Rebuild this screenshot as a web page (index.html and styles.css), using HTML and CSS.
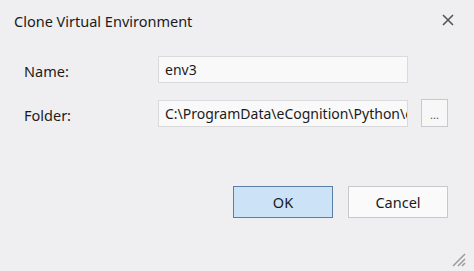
FILE: index.html
```html
<!DOCTYPE html>
<html>
<head>
<meta charset="utf-8">
<link rel="stylesheet" href="styles.css">
</head>
<body>
<div class="dialog">
  <div class="titlebar">
    <span class="title">Clone Virtual Environment</span>
    <span class="close">
      <svg width="12" height="12" viewBox="0 0 12 12"><path d="M1 1 L11 11 M11 1 L1 11" stroke="#555" stroke-width="1.6" fill="none"/></svg>
    </span>
  </div>
  <div class="form">
    <div class="label">Name:</div>
    <div class="field">env3</div>
    <div></div>
    <div class="label">Folder:</div>
    <div class="field">C:\ProgramData\eCognition\Python\env3</div>
    <div class="browse">...</div>
  </div>
  <div class="actions">
    <div class="btn ok">OK</div>
    <div class="btn">Cancel</div>
  </div>
  <svg class="grip" width="16" height="16" viewBox="0 0 16 16">
    <path d="M15 3 L3 15 M15 8 L8 15 M15 12 L12 15" stroke="#9a9a9a" stroke-width="1.5" fill="none"/>
  </svg>
</div>
</body>
</html>
```

FILE: styles.css
```css
html, body {
  margin: 0;
  padding: 0;
}
body {
  width: 474px;
  height: 271px;
  background: #efeff2;
  font-family: "Noto Sans", "Open Sans", sans-serif;
  color: #1b1b1b;
  overflow: hidden;
}
.dialog {
  position: relative;
  width: 474px;
  height: 271px;
  box-sizing: border-box;
}
.titlebar {
  display: flex;
  justify-content: space-between;
  align-items: center;
  height: 30px;
  padding: 6px 20px 0 14px;
}
.title {
  font-size: 14.5px;
}
.close {
  display: flex;
  margin-top: -2px;
}
.form {
  display: grid;
  grid-template-columns: 134px 250px 40px;
  row-gap: 17px;
  margin: 20px 0 0 24px;
}
.label {
  font-size: 14.5px;
  display: flex;
  align-items: center;
  padding-top: 3px;
}
.field {
  height: 27px;
  box-sizing: border-box;
  background: #f9f9fa;
  border: 1px solid #dadadd;
  padding: 0 6px;
  font-size: 14px;
  line-height: 25px;
  white-space: nowrap;
  overflow: hidden;
}
.browse {
  width: 27px;
  height: 28px;
  margin-left: 13px;
  box-sizing: border-box;
  border: 1px solid #c9c9cc;
  background: #f7f7f8;
  margin-top: -1px;
  font-size: 11px;
  text-align: center;
  line-height: 30px;
  color: #555;
}
.actions {
  display: flex;
  justify-content: flex-end;
  gap: 15px;
  margin: 59px 26px 0 0;
}
.btn {
  width: 100px;
  height: 32px;
  box-sizing: border-box;
  border: 1px solid #c8c8cb;
  background: #fafafb;
  font-size: 14.5px;
  line-height: 30px;
  text-align: center;
}
.btn.ok {
  background: #cce2f6;
  border-color: #5a7ea6;
}
.grip {
  position: absolute;
  right: 8px;
  bottom: 4px;
}
```
